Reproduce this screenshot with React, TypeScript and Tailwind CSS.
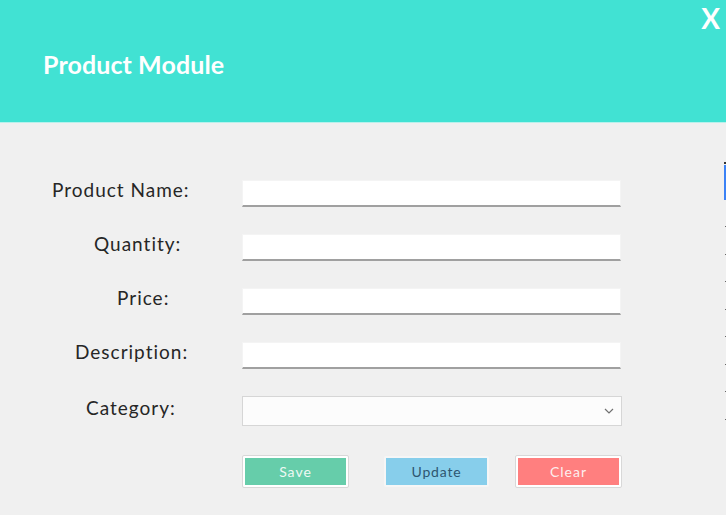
import React from "react";

const fields = [
  { label: "Product Name:", pad: "pl-[52px]" },
  { label: "Quantity:", pad: "pl-[94px]" },
  { label: "Price:", pad: "pl-[117px]" },
  { label: "Description:", pad: "pl-[75px]" },
];

function TextField({ label, pad }: { label: string; pad: string }) {
  return (
    <div className="flex items-center h-[27px]">
      <div className={`w-[242px] shrink-0 ${pad} -mt-[6px]`}>
        <span className="text-[19px] text-[#262626] tracking-[1px]">{label}</span>
      </div>
      <div className="w-[379px] h-[27px] bg-white border-t border-l border-r border-[#f4f4f4] border-b-2 border-b-[#a0a0a0]" />
    </div>
  );
}

export default function App() {
  return (
    <div className="w-[726px] h-[515px] overflow-hidden bg-[#f0f0f0] font-['Lato',sans-serif]">
      <div className="h-[123px] bg-[#41e2d3] border-b border-[#b9f1ec] flex items-start justify-between">
        <h1 className="pl-[43px] pt-[52px] text-[25px] leading-none font-bold text-white tracking-[0.1px]">Product Module</h1>
        <span className="pr-[6px] pt-[4px] text-[28px] font-bold text-white leading-none">X</span>
      </div>

      <div className="flex">
        <div className="flex-1 pt-[57px] flex flex-col gap-[27px]">
          {fields.map((f) => (
            <TextField key={f.label} label={f.label} pad={f.pad} />
          ))}
          <div className="flex items-center h-[30px]">
            <div className="w-[242px] shrink-0 pl-[86px] -mt-[5px]">
              <span className="text-[19px] text-[#262626] tracking-[1px]">Category:</span>
            </div>
            <div className="w-[380px] h-[30px] bg-[#fcfcfc] border border-[#d6d6d6] flex items-center justify-end pr-[7px]">
              <svg width="10" height="6" viewBox="0 0 10 6" fill="none" stroke="#707070" strokeWidth="1.2">
                <path d="M1 1l4 4 4-4" />
              </svg>
            </div>
          </div>

          <div className="flex items-center pl-[242px] mt-[2px]">
            <button className="w-[107px] h-[33px] p-[2px] bg-white border border-[#d8d8d8] rounded-[2px]">
              <div className="w-full h-full bg-[#66cdaa] flex items-center justify-center text-[14px] text-[#eef9f4] tracking-[1px]">
                Save
              </div>
            </button>
            <button className="ml-[35px] w-[105px] h-[31px] p-[2px] bg-[#f6f6f6] rounded-[2px]">
              <div className="w-full h-full bg-[#87ceeb] flex items-center justify-center text-[14px] text-[#2e5670] tracking-[0.8px]">
                Update
              </div>
            </button>
            <button className="ml-[26px] w-[107px] h-[33px] p-[2px] bg-white border border-[#d8d8d8] rounded-[2px]">
              <div className="w-full h-full bg-[#ff7f7f] flex items-center justify-center text-[14px] text-[#fdeeee] tracking-[1px]">
                Clear
              </div>
            </button>
          </div>
        </div>

        <div className="w-[2px] pt-[39px] flex flex-col items-end">
          <div className="w-[2px] h-[2px] bg-[#333]" />
          <div className="w-[2px] h-[35px] mt-[1px] bg-[#3b82f6]" />
          <div className="flex flex-col gap-[26.5px] mt-[26px]">
            {Array.from({ length: 8 }).map((_, i) => (
              <div key={i} className="w-[1px] h-[1px] bg-[#666]" />
            ))}
          </div>
        </div>
      </div>
    </div>
  );
}
